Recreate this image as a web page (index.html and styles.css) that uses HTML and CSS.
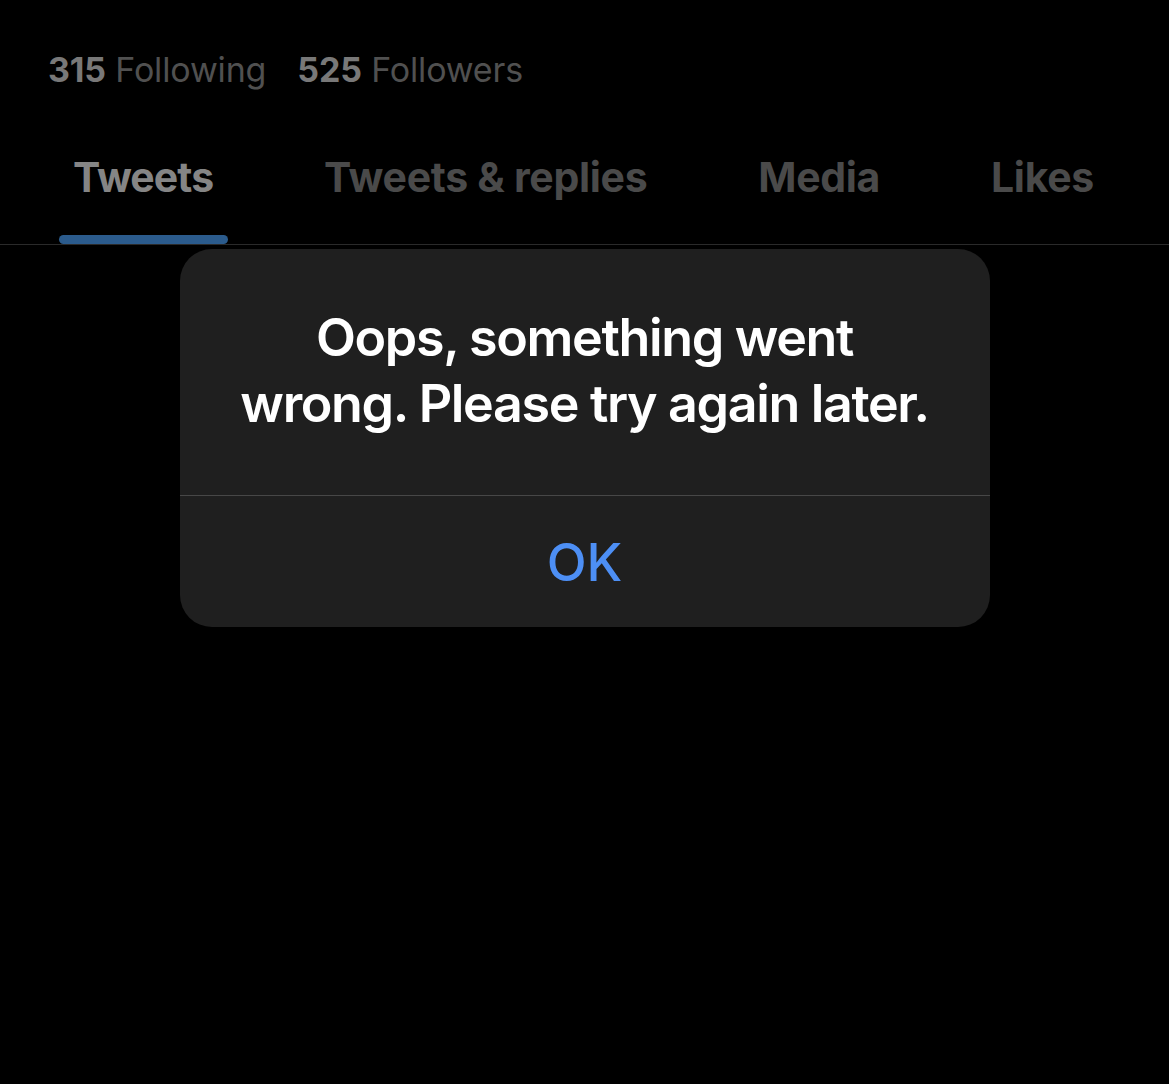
FILE: index.html
```html
<!DOCTYPE html>
<html lang="en">
<head>
<meta charset="utf-8">
<title>Profile</title>
<link rel="stylesheet" href="styles.css">
</head>
<body>
<div class="page">
  <div class="stats">
    <span class="stat"><b>315</b> Following</span>
    <span class="stat"><b>525</b> Followers</span>
  </div>
  <nav class="tabs">
    <div class="tab active"><span class="tab-label">Tweets</span><span class="indicator"></span></div>
    <div class="tab"><span class="tab-label">Tweets &amp; replies</span><span class="indicator"></span></div>
    <div class="tab"><span class="tab-label">Media</span><span class="indicator"></span></div>
    <div class="tab"><span class="tab-label">Likes</span><span class="indicator"></span></div>
  </nav>
  <div class="alert" role="alertdialog">
    <div class="alert-body">
      <p class="alert-title">Oops, something went<br>wrong. Please try again later.</p>
    </div>
    <div class="alert-actions">
      <span class="alert-button">OK</span>
    </div>
  </div>
</div>
</body>
</html>
```

FILE: styles.css
```css
html, body {
  margin: 0;
  padding: 0;
  background: #000;
}

body {
  font-family: Inter, "Liberation Sans", sans-serif;
  width: 1169px;
  height: 1084px;
  overflow: hidden;
}

.page {
  display: flex;
  flex-direction: column;
}

.stats {
  display: flex;
  gap: 31px;
  padding: 50px 48px 0;
  font-size: 34px;
  line-height: 40px;
  color: #505050;
  letter-spacing: -0.15px;
}

.stat b {
  color: #787878;
  font-weight: 700;
}

.tabs {
  display: flex;
  justify-content: space-between;
  margin-top: 63px;
  padding: 0 60px 0 59px;
  border-bottom: 1px solid #2a2a2a;
}

.tab {
  display: flex;
  flex-direction: column;
  align-items: stretch;
}

.tab-label {
  padding: 0 15px 0 14px;
  font-size: 41px;
  line-height: 48px;
  font-weight: 700;
  color: #4a4a4a;
  letter-spacing: -0.3px;
  white-space: nowrap;
}

.tab.active .tab-label {
  color: #858585;
  letter-spacing: -0.9px;
}

.tab.media .tab-label {
  margin-left: -10px;
}

.indicator {
  height: 9px;
  margin-top: 34px;
  border-radius: 5px;
  background: transparent;
}

.tab.active .indicator {
  background: #2b5b8c;
}

.alert {
  width: 810px;
  margin: 4px auto 0;
  background: #1f1f1f;
  border-radius: 32px;
  overflow: hidden;
}

.alert-body {
  padding: 56px 20px 58px;
  border-bottom: 1px solid #474747;
}

.alert-title {
  margin: 0;
  text-align: center;
  font-size: 52px;
  line-height: 66px;
  font-weight: 600;
  color: #fff;
  letter-spacing: -1.35px;
}

.alert-actions {
  display: flex;
  justify-content: center;
  padding: 34px 0 31px;
}

.alert-button {
  font-size: 52px;
  line-height: 66px;
  font-weight: 500;
  color: #4d8ff5;
}
```
